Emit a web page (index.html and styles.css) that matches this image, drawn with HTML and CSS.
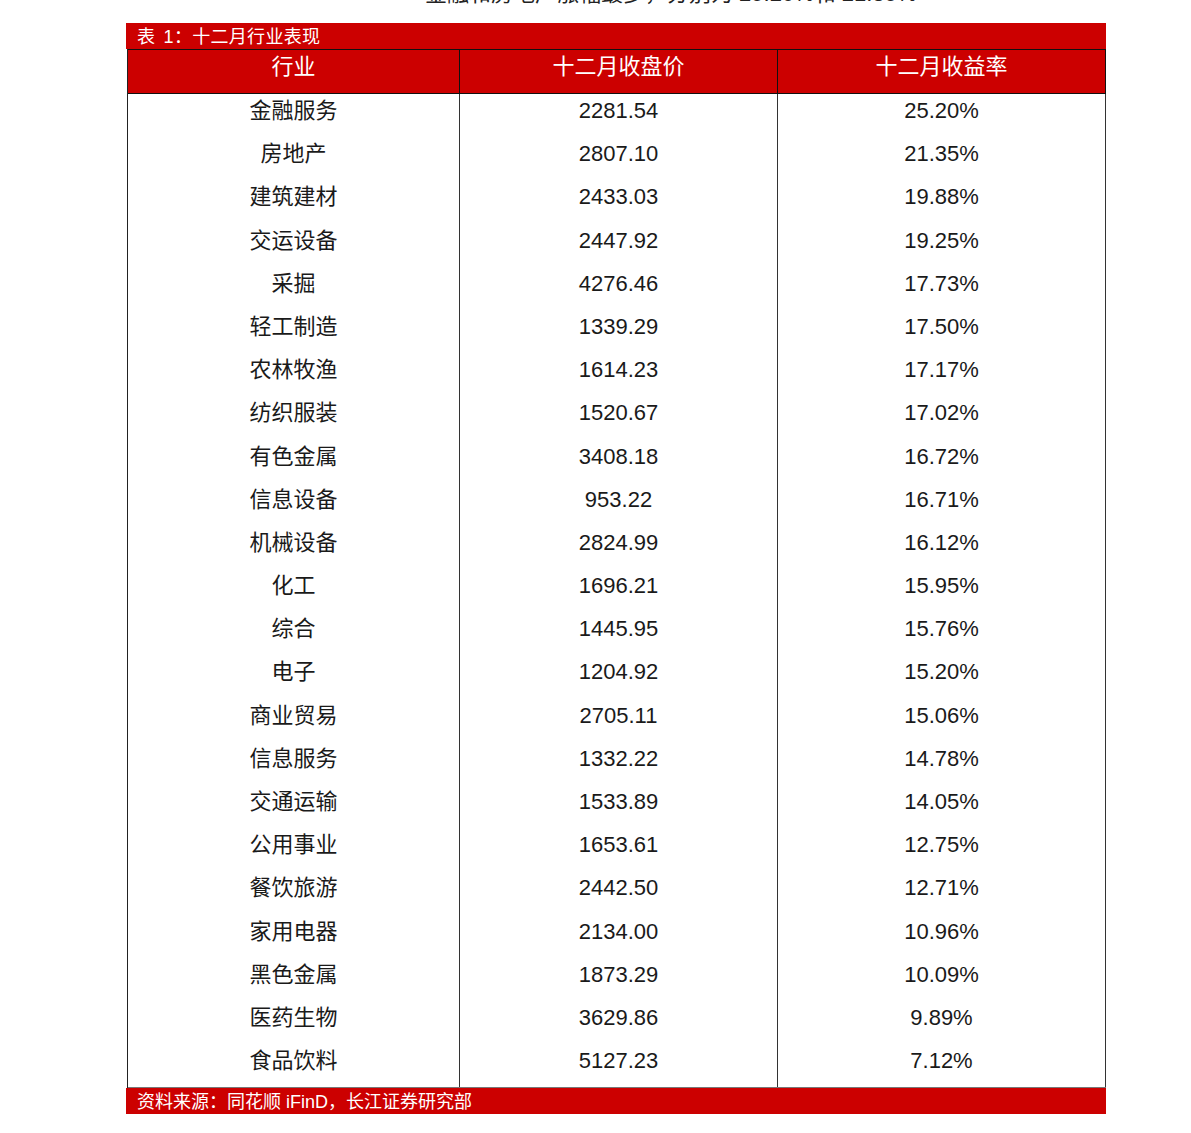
FILE: index.html
```html
<!DOCTYPE html>
<html lang="zh-CN">
<head>
<meta charset="utf-8">
<title>十二月行业表现</title>
<link rel="stylesheet" href="styles.css">
</head>
<body>
<div class="lead"><div class="lead-text">金融和房地产涨幅最多，分别为 25.20%和 21.35%</div></div>
<div class="wrap">
  <div class="caption">表 1：十二月行业表现</div>
  <div class="table">
    <div class="row head">
      <div class="cell">行业</div>
      <div class="cell">十二月收盘价</div>
      <div class="cell">十二月收益率</div>
    </div>
    <div class="body">
      <div class="row"><div class="cell">金融服务</div><div class="cell">2281.54</div><div class="cell">25.20%</div></div>
      <div class="row"><div class="cell">房地产</div><div class="cell">2807.10</div><div class="cell">21.35%</div></div>
      <div class="row"><div class="cell">建筑建材</div><div class="cell">2433.03</div><div class="cell">19.88%</div></div>
      <div class="row"><div class="cell">交运设备</div><div class="cell">2447.92</div><div class="cell">19.25%</div></div>
      <div class="row"><div class="cell">采掘</div><div class="cell">4276.46</div><div class="cell">17.73%</div></div>
      <div class="row"><div class="cell">轻工制造</div><div class="cell">1339.29</div><div class="cell">17.50%</div></div>
      <div class="row"><div class="cell">农林牧渔</div><div class="cell">1614.23</div><div class="cell">17.17%</div></div>
      <div class="row"><div class="cell">纺织服装</div><div class="cell">1520.67</div><div class="cell">17.02%</div></div>
      <div class="row"><div class="cell">有色金属</div><div class="cell">3408.18</div><div class="cell">16.72%</div></div>
      <div class="row"><div class="cell">信息设备</div><div class="cell">953.22</div><div class="cell">16.71%</div></div>
      <div class="row"><div class="cell">机械设备</div><div class="cell">2824.99</div><div class="cell">16.12%</div></div>
      <div class="row"><div class="cell">化工</div><div class="cell">1696.21</div><div class="cell">15.95%</div></div>
      <div class="row"><div class="cell">综合</div><div class="cell">1445.95</div><div class="cell">15.76%</div></div>
      <div class="row"><div class="cell">电子</div><div class="cell">1204.92</div><div class="cell">15.20%</div></div>
      <div class="row"><div class="cell">商业贸易</div><div class="cell">2705.11</div><div class="cell">15.06%</div></div>
      <div class="row"><div class="cell">信息服务</div><div class="cell">1332.22</div><div class="cell">14.78%</div></div>
      <div class="row"><div class="cell">交通运输</div><div class="cell">1533.89</div><div class="cell">14.05%</div></div>
      <div class="row"><div class="cell">公用事业</div><div class="cell">1653.61</div><div class="cell">12.75%</div></div>
      <div class="row"><div class="cell">餐饮旅游</div><div class="cell">2442.50</div><div class="cell">12.71%</div></div>
      <div class="row"><div class="cell">家用电器</div><div class="cell">2134.00</div><div class="cell">10.96%</div></div>
      <div class="row"><div class="cell">黑色金属</div><div class="cell">1873.29</div><div class="cell">10.09%</div></div>
      <div class="row"><div class="cell">医药生物</div><div class="cell">3629.86</div><div class="cell">9.89%</div></div>
      <div class="row"><div class="cell">食品饮料</div><div class="cell">5127.23</div><div class="cell">7.12%</div></div>
    </div>
  </div>
  <div class="source">资料来源：同花顺 iFinD，长江证券研究部</div>
</div>
</body>
</html>
```

FILE: styles.css
```css
html, body {
  margin: 0;
  padding: 0;
  background: #fff;
}
body {
  font-family: "Liberation Sans", "Noto Sans CJK SC", sans-serif;
  color: #1a1a1a;
  width: 1191px;
  height: 1133px;
  overflow: hidden;
}
.lead {
  height: 23px;
  overflow: hidden;
}
.lead-text {
  margin-top: -17px;
  padding-left: 425px;
  font-size: 22px;
  line-height: 22px;
  white-space: nowrap;
  color: #222;
}
.wrap {
  margin-left: 126px;
  width: 980px;
}
.caption {
  height: 26px;
  background: #cc0000;
  color: #fff;
  font-size: 18px;
  line-height: 29px;
  letter-spacing: 0.3px;
  word-spacing: 3px;
  padding-left: 11px;
  box-sizing: border-box;
  overflow: hidden;
}
.table {
  margin-left: 1px;
  width: 979px;
  border-left: 1px solid #222;
  box-sizing: border-box;
}
.row {
  display: grid;
  grid-template-columns: 332px 318px 328px;
  height: 43.2px;
}
.row .cell {
  border-right: 1px solid #333;
  text-align: center;
  font-size: 22px;
  line-height: 24px;
  padding-top: 5px;
}
.head {
  height: 45px;
  background: #cc0000;
  color: #fff;
  border-top: 1px solid #111;
  border-bottom: 1px solid #111;
  box-sizing: border-box;
}
.head .cell {
  border-right-color: #111;
  padding-top: 5px;
  font-size: 22px;
}
.body {
  border-bottom: 1px solid #777;
}
.source {
  height: 26px;
  background: #cc0000;
  color: #fff;
  font-size: 18px;
  line-height: 28px;
  padding-left: 11px;
  box-sizing: border-box;
  overflow: hidden;
}
```
